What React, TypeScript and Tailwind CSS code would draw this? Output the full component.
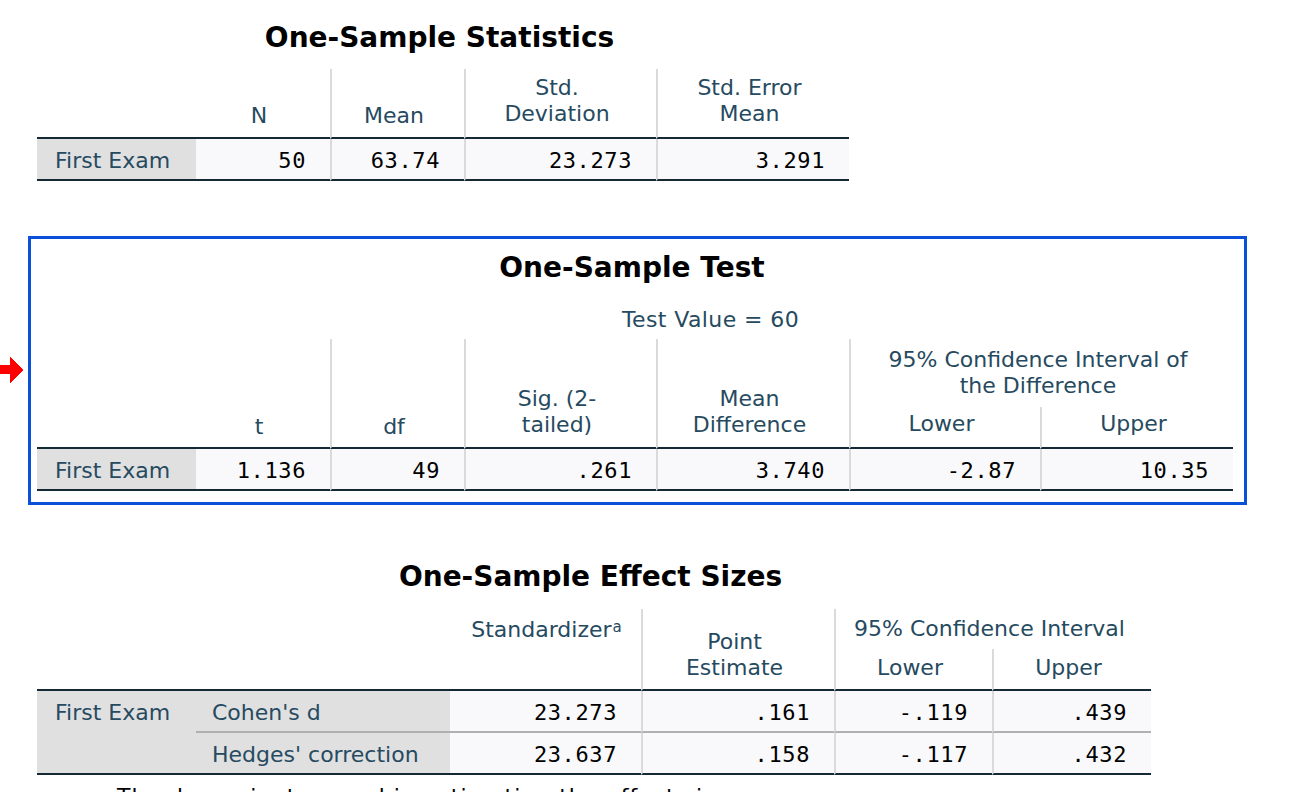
import React from "react";

const LINE = "border-b-2 border-b-[#152935]";
const GLINE = "border-b-2 border-b-[#b0b0b0]";
const SEP = "border-l-2 border-l-[#dadada]";
const HDR = "flex flex-col items-center text-center text-[#264a60] pr-2";
const NUM =
  "flex items-center justify-end pr-6 pt-1 bg-[#f9f9fb] font-['DejaVu_Sans_Mono',monospace] tracking-[0.6px] text-black";
const LBL = "flex items-center pt-1 bg-[#e0e0e0] text-[#264a60] whitespace-nowrap";
const TITLE = "text-center text-[28px] font-bold leading-[36px] text-black";

export default function App() {
  return (
    <div className="relative w-[1298px] h-[792px] overflow-hidden bg-white font-['DejaVu_Sans',sans-serif] text-[22px] leading-[26px]">
      {/* red marker arrow */}
      <svg
        className="absolute left-0 top-[357px]"
        width="24"
        height="27"
        viewBox="0 0 24 27"
        shapeRendering="crispEdges"
      >
        <polygon points="0,8 10,8 10,0 23,13 10,26 10,17 0,17" fill="#ff0000" />
      </svg>

      {/* One-Sample Statistics */}
      <div className="pl-[37px] pt-[20px]">
        <div className={TITLE + " w-[812px] pr-[7px]"}>One-Sample Statistics</div>
        <div className="mt-[13px] grid w-[812px] grid-cols-[159px_134px_134px_192px_193px] grid-rows-[70px_42px]">
          <div className={LINE} />
          <div className={HDR + " justify-end pb-[8px] " + LINE}>
            <div>N</div>
          </div>
          <div className={HDR + " justify-end pb-[8px] " + LINE + " " + SEP}>
            <div>Mean</div>
          </div>
          <div className={HDR + " justify-end pb-[10px] " + LINE + " " + SEP}>
            <div>
              Std.
              <br />
              Deviation
            </div>
          </div>
          <div className={HDR + " justify-end pb-[10px] " + LINE + " " + SEP}>
            <div>
              Std. Error
              <br />
              Mean
            </div>
          </div>

          <div className={LBL + " pl-[18px] " + LINE}>First Exam</div>
          <div className={NUM + " " + LINE}>50</div>
          <div className={NUM + " " + LINE + " " + SEP}>63.74</div>
          <div className={NUM + " " + LINE + " " + SEP}>23.273</div>
          <div className={NUM + " " + LINE + " " + SEP}>3.291</div>
        </div>
      </div>

      {/* One-Sample Test (selected) */}
      <div className="ml-[28px] mt-[55px] w-[1219px] border-[3px] border-[#0b50d9] pl-[6px] pt-[11px] pb-[11px]">
        <div className={TITLE + " w-[1196px] pr-[6px]"}>One-Sample Test</div>
        <div className="mt-[14px] grid w-[1196px] grid-cols-[159px_134px_134px_192px_193px_191px_193px] grid-rows-[39px_68px_42px_42px]">
          <div className={"row-span-3 " + LINE} />
          <div className="col-span-6 flex items-center justify-center pr-2 text-[#264a60] tracking-[0.4px]">
            Test Value = 60
          </div>

          <div className={"row-span-2 justify-end pb-[7px] " + HDR + " " + LINE}>
            <div>t</div>
          </div>
          <div className={"row-span-2 justify-end pb-[7px] " + HDR + " " + LINE + " " + SEP}>
            <div>df</div>
          </div>
          <div className={"row-span-2 justify-end pb-[9px] " + HDR + " " + LINE + " " + SEP}>
            <div>
              Sig. (2-
              <br />
              tailed)
            </div>
          </div>
          <div className={"row-span-2 justify-end pb-[9px] " + HDR + " " + LINE + " " + SEP}>
            <div>
              Mean
              <br />
              Difference
            </div>
          </div>
          <div className={"col-span-2 justify-start pt-[8px] " + HDR + " " + SEP}>
            <div>
              95% Confidence Interval of
              <br />
              the Difference
            </div>
          </div>
          <div className={"justify-start pt-[4px] " + HDR + " " + LINE + " " + SEP}>
            <div>Lower</div>
          </div>
          <div className={"justify-start pt-[4px] " + HDR + " " + LINE + " " + SEP}>
            <div>Upper</div>
          </div>

          <div className={LBL + " pl-[18px] " + LINE}>First Exam</div>
          <div className={NUM + " " + LINE}>1.136</div>
          <div className={NUM + " " + LINE + " " + SEP}>49</div>
          <div className={NUM + " " + LINE + " " + SEP}>.261</div>
          <div className={NUM + " " + LINE + " " + SEP}>3.740</div>
          <div className={NUM + " " + LINE + " " + SEP}>-2.87</div>
          <div className={NUM + " " + LINE + " " + SEP}>10.35</div>
        </div>
      </div>

      {/* One-Sample Effect Sizes */}
      <div className="pl-[37px]">
        <div className={TITLE + " mt-[54px] w-[1114px] pr-[7px]"}>One-Sample Effect Sizes</div>
        <div className="mt-[14px] grid w-[1114px] grid-cols-[159px_254px_191px_193px_158px_159px] grid-rows-[40px_42px_42px_42px]">
          <div className={"col-span-2 row-span-2 " + LINE} />
          <div className={"row-span-2 justify-start pt-[8px] pl-[10px] " + HDR + " " + LINE}>
            <div>
              Standardizer
              <span className="relative -top-[5px] ml-[1px] text-[15px] leading-none">a</span>
            </div>
          </div>
          <div className={"row-span-2 justify-end pb-[8px] " + HDR + " " + LINE + " " + SEP}>
            <div>
              Point
              <br />
              Estimate
            </div>
          </div>
          <div className={"col-span-2 justify-start pt-[7px] " + HDR + " " + SEP}>
            <div>95% Confidence Interval</div>
          </div>
          <div className={"justify-start pt-[6px] " + HDR + " " + LINE + " " + SEP}>
            <div>Lower</div>
          </div>
          <div className={"justify-start pt-[6px] " + HDR + " " + LINE + " " + SEP}>
            <div>Upper</div>
          </div>

          <div className="row-span-2 flex items-start bg-[#e0e0e0] pl-[18px] pt-[9px] text-[#264a60] border-b-2 border-b-[#152935]">
            First Exam
          </div>
          <div className={LBL + " pl-[16px] " + GLINE}>Cohen's d</div>
          <div className={NUM + " " + GLINE}>23.273</div>
          <div className={NUM + " " + GLINE + " " + SEP}>.161</div>
          <div className={NUM + " " + GLINE + " " + SEP}>-.119</div>
          <div className={NUM + " " + GLINE + " " + SEP}>.439</div>

          <div className={LBL + " pl-[16px] " + LINE}>Hedges' correction</div>
          <div className={NUM + " " + LINE}>23.637</div>
          <div className={NUM + " " + LINE + " " + SEP}>.158</div>
          <div className={NUM + " " + LINE + " " + SEP}>-.117</div>
          <div className={NUM + " " + LINE + " " + SEP}>.432</div>
        </div>
        <div className="ml-[80px] mt-[9px] whitespace-nowrap tracking-[1px] text-black">
          The denominator used in estimating the effect sizes.
        </div>
      </div>
    </div>
  );
}
